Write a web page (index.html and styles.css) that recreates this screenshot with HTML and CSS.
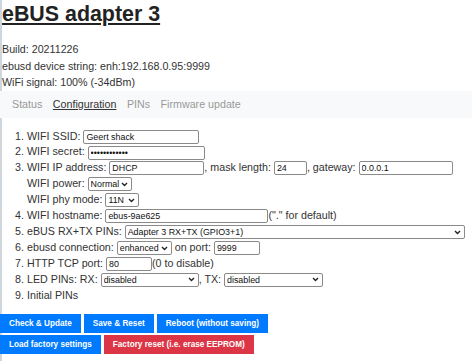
FILE: index.html
```html
<!DOCTYPE html>
<html lang="en">
<head>
    <meta charset="UTF-8">
    <meta name="viewport" content="width=device-width, initial-scale=1.0">
    <title>eBUS adapter 3</title>
    <link rel="stylesheet" href="styles.css">
</head>
<body>
    <h1 class="title">eBUS adapter 3</h1>

    <div class="info">
        Build: 20211226<br>
        ebusd device string: enh:192.168.0.95:9999<br>
        WiFi signal: 100% (-34dBm)
    </div>

    <nav class="menu">
        <a href="#">Status</a>
        <a href="#" class="active">Configuration</a>
        <a href="#">PINs</a>
        <a href="#">Firmware update</a>
    </nav>

    <!-- Configuration form -->
    <form class="config">
        <ol class="fields">
            <li>WIFI SSID: <input type="text" class="w-ssid" value="Geert shack"></li>
            <li>WIFI secret: <input type="password" class="w-secret" value="geheimwachtw"></li>
            <li>
                WIFI IP address: <input type="text" class="w-ip" value="DHCP">, mask length: <input type="text" class="w-mask" value="24">, gateway: <input type="text" class="w-gw" value="0.0.0.1"><br>
                <span class="sub">WIFI power: <select class="s-power"><option>Normal</option><option>High</option></select></span><br>
                <span class="sub">WIFI phy mode: <select class="s-phy"><option>11N</option><option>11G</option><option>11B</option></select></span>
            </li>
            <li>WIFI hostname: <input type="text" class="w-host" value="ebus-9ae625">("." for default)</li>
            <li>eBUS RX+TX PINs: <select class="s-pins"><option>Adapter 3 RX+TX (GPIO3+1)</option></select></li>
            <li>ebusd connection: <select class="s-conn"><option>enhanced</option><option>regular</option></select> on port: <input type="text" class="w-port" value="9999"></li>
            <li>HTTP TCP port: <input type="text" class="w-http" value="80">(0 to disable)</li>
            <li>LED PINs: RX: <select class="s-rx"><option>disabled</option></select>, TX: <select class="s-tx"><option>disabled</option></select></li>
            <li>Initial PINs</li>
        </ol>

        <div class="actions">
            <button type="button" class="btn">Check &amp; Update</button>
            <button type="button" class="btn">Save &amp; Reset</button>
            <button type="button" class="btn">Reboot (without saving)</button>
        </div>
        <div class="actions">
            <button type="button" class="btn">Load factory settings</button>
            <button type="button" class="btn danger">Factory reset (i.e. erase EEPROM)</button>
        </div>
    </form>
</body>
</html>
```

FILE: styles.css
```css
html {
    background: linear-gradient(to right, #cfd6dc 2px, #ffffff 2px);
}
body {
    margin: 0;
    padding-left: 2px;
    font-family: "Liberation Sans", Arial, sans-serif;
    font-size: 10.7px;
    color: #333;
}
.title {
    margin: 2px 0 0;
    font-size: 21.4px;
    line-height: 24px;
    font-weight: bold;
    color: #222;
    text-decoration: underline;
}
.info {
    margin-top: 15px;
    line-height: 16.5px;
}
.menu {
    display: flex;
    gap: 10.5px;
    align-items: center;
    height: 27px;
    margin-right: 2px;
    margin-left: -2px;
    padding-left: 12px;
    background-color: #f8f9fa;
}
.menu a {
    color: #999;
    text-decoration: none;
}
.menu a.active {
    color: #333;
    text-decoration: underline;
}
.fields {
    margin: 11px 0 0;
    padding-left: 25px;
    line-height: 15.9px;
}
.fields input, .fields select {
    box-sizing: border-box;
    height: 14px;
    margin: 0;
    padding: 0 2px;
    vertical-align: middle;
    font-family: "Liberation Sans", Arial, sans-serif;
    font-size: 8.9px;
    color: #111;
    border: 1px solid #8a8a8a;
    border-radius: 2px;
    background-color: #fff;
}
.fields select {
    appearance: none;
    -webkit-appearance: none;
    padding: 0 9px 0 2px;
    background-image: url("data:image/svg+xml,%3Csvg xmlns='http://www.w3.org/2000/svg' width='7' height='5' viewBox='0 0 7 5'%3E%3Cpath d='M1 1l2.5 2.5L6 1' fill='none' stroke='%23222' stroke-width='1.4'/%3E%3C/svg%3E");
    background-repeat: no-repeat;
    background-position: right 3px center;
    background-size: 7px 5px;
}
.w-ssid { width: 116px; }
.w-secret { width: 117px; }
.w-ip { width: 95px; }
.w-mask { width: 33px; }
.w-gw { width: 94px; }
.w-host { width: 163px; }
.w-port { width: 46px; }
.w-http { width: 46px; }
.s-power { width: 44px; }
.s-phy { width: 34px; }
.s-pins { width: 340px; }
.s-conn { width: 55px; }
.s-rx { width: 98px; }
.s-tx { width: 99px; }
.actions {
    display: flex;
    gap: 3px;
    margin-left: -2px;
}
.actions:first-of-type {
    margin-top: 11px;
}
.actions + .actions {
    margin-top: 2px;
}
.btn {
    height: 19px;
    padding: 0 9px;
    border: none;
    background-color: #007bff;
    color: #fff;
    font-family: "Liberation Sans", Arial, sans-serif;
    font-size: 8.2px;
    font-weight: bold;
    cursor: pointer;
}
.btn.danger {
    background-color: #dc3545;
}
```
